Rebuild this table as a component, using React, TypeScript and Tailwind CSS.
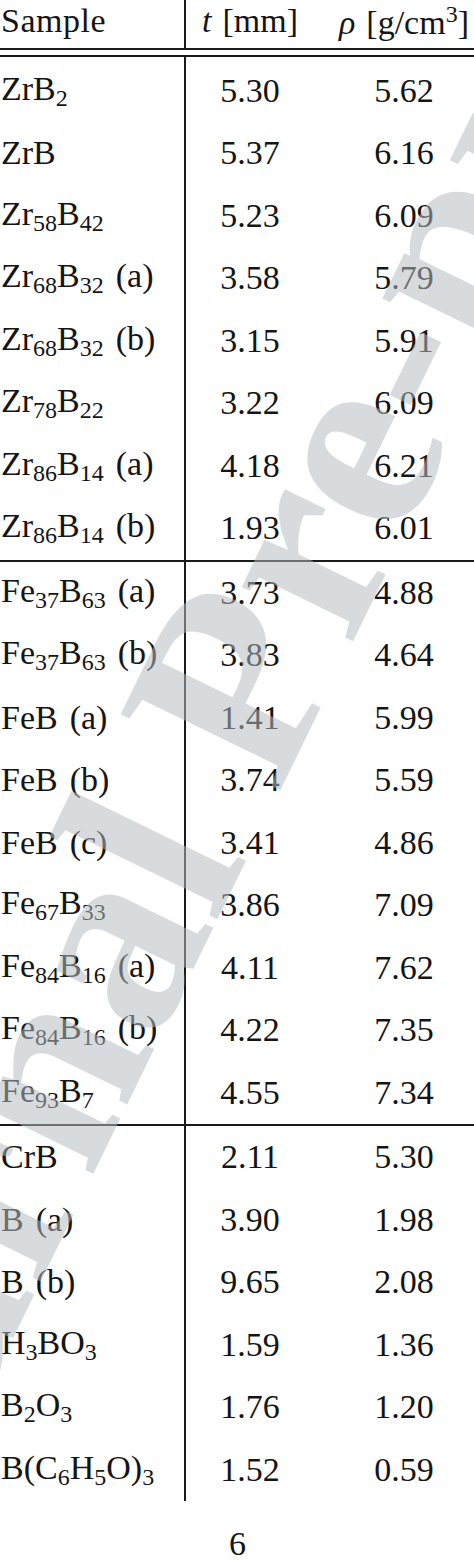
import React from "react";

type Row = { f: string; label?: string; t: string; r: string };

const groups: Row[][] = [
  [
    { f: "ZrB_2", t: "5.30", r: "5.62" },
    { f: "ZrB", t: "5.37", r: "6.16" },
    { f: "Zr_58B_42", t: "5.23", r: "6.09" },
    { f: "Zr_68B_32", label: "(a)", t: "3.58", r: "5.79" },
    { f: "Zr_68B_32", label: "(b)", t: "3.15", r: "5.91" },
    { f: "Zr_78B_22", t: "3.22", r: "6.09" },
    { f: "Zr_86B_14", label: "(a)", t: "4.18", r: "6.21" },
    { f: "Zr_86B_14", label: "(b)", t: "1.93", r: "6.01" },
  ],
  [
    { f: "Fe_37B_63", label: "(a)", t: "3.73", r: "4.88" },
    { f: "Fe_37B_63", label: "(b)", t: "3.83", r: "4.64" },
    { f: "FeB", label: "(a)", t: "1.41", r: "5.99" },
    { f: "FeB", label: "(b)", t: "3.74", r: "5.59" },
    { f: "FeB", label: "(c)", t: "3.41", r: "4.86" },
    { f: "Fe_67B_33", t: "3.86", r: "7.09" },
    { f: "Fe_84B_16", label: "(a)", t: "4.11", r: "7.62" },
    { f: "Fe_84B_16", label: "(b)", t: "4.22", r: "7.35" },
    { f: "Fe_93B_7", t: "4.55", r: "7.34" },
  ],
  [
    { f: "CrB", t: "2.11", r: "5.30" },
    { f: "B", label: "(a)", t: "3.90", r: "1.98" },
    { f: "B", label: "(b)", t: "9.65", r: "2.08" },
    { f: "H_3BO_3", t: "1.59", r: "1.36" },
    { f: "B_2O_3", t: "1.76", r: "1.20" },
    { f: "B(C_6H_5O)_3", t: "1.52", r: "0.59" },
  ],
];

function Formula({ f }: { f: string }) {
  const parts = f.split(/_(\d+)/);
  return (
    <>
      {parts.map((p, i) =>
        i % 2 === 1 ? (
          <span key={i} className="text-[24px] align-[-6px]">
            {p}
          </span>
        ) : (
          <span key={i}>{p}</span>
        )
      )}
    </>
  );
}

function Line() {
  return <div className="h-[2px] w-full bg-[#1a1a1a]" />;
}

function BodyRow({ row }: { row: Row }) {
  return (
    <div className="flex h-[62.5px] items-stretch">
      <div className="flex w-[186px] shrink-0 items-center whitespace-nowrap border-r-2 border-[#1a1a1a] pl-[1px]">
        <span>
          <Formula f={row.f} />
          {row.label && <span className="ml-[12px]">{row.label}</span>}
        </span>
      </div>
      <div className="flex w-[128px] shrink-0 items-center justify-center">{row.t}</div>
      <div className="flex w-[180px] shrink-0 items-center justify-center">{row.r}</div>
    </div>
  );
}

export default function App() {
  return (
    <div
      className="relative h-[1564px] w-[474px] overflow-hidden bg-white text-[34px] leading-none text-[#151515]"
      style={{ fontFamily: '"Liberation Serif", "Times New Roman", serif' }}
    >
      {/* header */}
      <div className="flex h-[48px] items-stretch">
        <div className="flex w-[186px] shrink-0 items-center whitespace-nowrap border-r-2 border-[#1a1a1a] pb-[6px] pl-[1px]">
          <span className="tracking-[0.5px]">Sample</span>
        </div>
        <div className="flex w-[128px] shrink-0 items-center justify-center whitespace-nowrap pb-[6px]">
          <span>
            <span className="italic">t</span>
            <span className="ml-[11px]">[mm]</span>
          </span>
        </div>
        <div className="flex w-[180px] shrink-0 items-center justify-center whitespace-nowrap pb-[6px]">
          <span>
            <span className="italic">ρ</span>
            <span className="ml-[11px]">
              [g/cm<span className="text-[24px] align-[12px]">3</span>]
            </span>
          </span>
        </div>
      </div>
      <Line />
      <div className="h-[4.5px]" />
      <Line />
      <div className="flex h-[3px]">
        <div className="w-[186px] shrink-0 border-r-2 border-[#1a1a1a]" />
      </div>

      {groups.map((g, gi) => (
        <div key={gi}>
          {gi > 0 && <Line />}
          {g.map((row, ri) => (
            <BodyRow key={ri} row={row} />
          ))}
        </div>
      ))}

      <div className="mt-[26px] flex h-[34px] items-center justify-center pl-[1px]">6</div>

      {/* watermark */}
      <div className="pointer-events-none absolute left-[228px] top-[690px] -translate-x-1/2 -translate-y-1/2 -rotate-[64deg] whitespace-nowrap text-[270px] font-bold leading-none text-[#b4bcc0] opacity-[0.53]">
        Journal Pre-proof
      </div>
    </div>
  );
}
